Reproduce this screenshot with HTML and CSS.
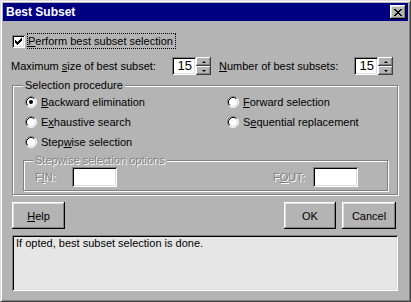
FILE: index.html
```html
<!DOCTYPE html>
<html lang="en">
<head>
  <meta charset="UTF-8" />
  <title>Best Subset</title>
  <link rel="stylesheet" href="styles.css">
</head>
<body>
  <div class="window">
    <div class="titlebar">
      <span class="title">Best Subset</span>
      <button class="close" aria-label="Close">
        <svg width="8" height="7" viewBox="0 0 8 7" shape-rendering="crispEdges">
          <path d="M0 0h2v1H0zM6 0h2v1H6zM1 1h2v1H1zM5 1h2v1H5zM2 2h4v1H2zM3 3h2v1H3zM2 4h4v1H2zM1 5h2v1H1zM5 5h2v1H5zM0 6h2v1H0zM6 6h2v1H6z" fill="#000"/>
        </svg>
      </button>
    </div>

    <div class="client">
      <div class="check-row">
        <span class="checkbox">
          <svg width="7" height="7" viewBox="0 0 7 7" shape-rendering="crispEdges">
            <path d="M6 0h1v3H6zM5 1h1v3H5zM4 2h1v3H4zM0 2h1v3H0zM1 3h1v3H1zM2 4h1v3H2zM3 3h1v3H3z" fill="#000"/>
          </svg>
        </span>
        <span class="focus"><u>P</u>erform best subset selection</span>
      </div>

      <div class="spin-row">
        <span class="lbl lbl-max">Maximum <u>s</u>ize of best subset:</span>
        <div class="spin">
          <div class="edit">15</div>
          <div class="arrows">
            <span class="arr"><i class="tri up"></i></span>
            <span class="arr"><i class="tri down"></i></span>
          </div>
        </div>
        <span class="lbl lbl-num"><u>N</u>umber of best subsets:</span>
        <div class="spin">
          <div class="edit">15</div>
          <div class="arrows">
            <span class="arr"><i class="tri up"></i></span>
            <span class="arr"><i class="tri down"></i></span>
          </div>
        </div>
      </div>

      <div class="group outer">
        <div class="caption">Selection procedure</div>
        <div class="radios">
          <label class="radio"><svg class="rb" width="12" height="12" viewBox="0 0 12 12"><circle cx="6" cy="6" r="5" fill="#fff"/><path d="M2.11 9.89A5.5 5.5 0 0 1 9.89 2.11" stroke="#808080" fill="none"/><path d="M9.89 2.11A5.5 5.5 0 0 1 2.11 9.89" stroke="#fff" fill="none"/><path d="M2.82 9.18A4.5 4.5 0 0 1 9.18 2.82" stroke="#000" fill="none"/><path d="M9.18 2.82A4.5 4.5 0 0 1 2.82 9.18" stroke="#dfdfdf" fill="none"/><circle cx="6" cy="6" r="2" fill="#000"/></svg><span><u>B</u>ackward elimination</span></label>
          <label class="radio"><svg class="rb" width="12" height="12" viewBox="0 0 12 12"><circle cx="6" cy="6" r="5" fill="#fff"/><path d="M2.11 9.89A5.5 5.5 0 0 1 9.89 2.11" stroke="#808080" fill="none"/><path d="M9.89 2.11A5.5 5.5 0 0 1 2.11 9.89" stroke="#fff" fill="none"/><path d="M2.82 9.18A4.5 4.5 0 0 1 9.18 2.82" stroke="#000" fill="none"/><path d="M9.18 2.82A4.5 4.5 0 0 1 2.82 9.18" stroke="#dfdfdf" fill="none"/></svg><span><u>F</u>orward selection</span></label>
          <label class="radio"><svg class="rb" width="12" height="12" viewBox="0 0 12 12"><circle cx="6" cy="6" r="5" fill="#fff"/><path d="M2.11 9.89A5.5 5.5 0 0 1 9.89 2.11" stroke="#808080" fill="none"/><path d="M9.89 2.11A5.5 5.5 0 0 1 2.11 9.89" stroke="#fff" fill="none"/><path d="M2.82 9.18A4.5 4.5 0 0 1 9.18 2.82" stroke="#000" fill="none"/><path d="M9.18 2.82A4.5 4.5 0 0 1 2.82 9.18" stroke="#dfdfdf" fill="none"/></svg><span>E<u>x</u>haustive search</span></label>
          <label class="radio"><svg class="rb" width="12" height="12" viewBox="0 0 12 12"><circle cx="6" cy="6" r="5" fill="#fff"/><path d="M2.11 9.89A5.5 5.5 0 0 1 9.89 2.11" stroke="#808080" fill="none"/><path d="M9.89 2.11A5.5 5.5 0 0 1 2.11 9.89" stroke="#fff" fill="none"/><path d="M2.82 9.18A4.5 4.5 0 0 1 9.18 2.82" stroke="#000" fill="none"/><path d="M9.18 2.82A4.5 4.5 0 0 1 2.82 9.18" stroke="#dfdfdf" fill="none"/></svg><span>S<u>e</u>quential replacement</span></label>
          <label class="radio"><svg class="rb" width="12" height="12" viewBox="0 0 12 12"><circle cx="6" cy="6" r="5" fill="#fff"/><path d="M2.11 9.89A5.5 5.5 0 0 1 9.89 2.11" stroke="#808080" fill="none"/><path d="M9.89 2.11A5.5 5.5 0 0 1 2.11 9.89" stroke="#fff" fill="none"/><path d="M2.82 9.18A4.5 4.5 0 0 1 9.18 2.82" stroke="#000" fill="none"/><path d="M9.18 2.82A4.5 4.5 0 0 1 2.82 9.18" stroke="#dfdfdf" fill="none"/></svg><span>Step<u>w</u>ise selection</span></label>
        </div>

        <div class="group inner">
          <div class="caption disabled">Stepwise selection options</div>
          <div class="opt-row">
            <span class="disabled lbl-fin">F<u>I</u>N:</span>
            <div class="edit wide"></div>
            <span class="disabled lbl-fout">F<u>O</u>UT:</span>
            <div class="edit wide"></div>
          </div>
        </div>
      </div>

      <div class="buttons">
        <button class="btn btn-help"><u>H</u>elp</button>
        <button class="btn btn-ok">OK</button>
        <button class="btn btn-cancel">Cancel</button>
      </div>

      <div class="hint">If opted, best subset selection is done.</div>
    </div>
  </div>
</body>
</html>
```

FILE: styles.css
```css
html, body {
  margin: 0;
  padding: 0;
  background: #b4b4b4;
}
body {
  font-family: 'Liberation Sans', Arial, sans-serif;
  font-size: 11px;
  color: #000;
}
u {
  text-decoration: underline;
  text-underline-offset: 1px;
}
.window {
  width: 411px;
  height: 302px;
  box-sizing: border-box;
  border: 1px solid;
  border-color: #dfdfdf #404040 #404040 #dfdfdf;
  box-shadow: inset 1px 1px #fff, inset -1px -1px #808080;
  padding: 2px;
  background: #b4b4b4;
}
.titlebar {
  height: 18px;
  background: #000080;
  display: flex;
  align-items: center;
  justify-content: space-between;
  padding-left: 3px;
}
.title {
  color: #fff;
  font-weight: bold;
  font-size: 12px;
}
.close {
  width: 16px;
  height: 14px;
  margin-right: 2px;
  padding: 0;
  border: none;
  background: #b4b4b4;
  box-shadow: inset -1px -1px #000, inset 1px 1px #fff, inset -2px -2px #808080, inset 2px 2px #dfdfdf;
  display: flex;
  align-items: center;
  justify-content: center;
}
.client {
  padding: 12px 10px 0 9px;
}

/* checkbox */
.check-row {
  display: flex;
  align-items: center;
  height: 16px;
}
.checkbox {
  width: 13px;
  height: 13px;
  box-sizing: border-box;
  background: #fff;
  box-shadow: inset 1px 1px #808080, inset -1px -1px #fff, inset 2px 2px #000, inset -2px -2px #dfdfdf;
  display: flex;
  align-items: center;
  justify-content: center;
}
.focus {
  margin-left: 2px;
  padding: 0 2px 0 0;
  line-height: 14px;
  border: 1px dotted #000;
}

/* spinners */
.spin-row {
  display: flex;
  align-items: center;
  margin-top: 8px;
  height: 18px;
}
.lbl-max {
  width: 161px;
  margin-left: -1px;
}
.lbl-num {
  width: 135px;
  margin-left: 8px;
}
.spin {
  display: flex;
  height: 18px;
}
.edit {
  width: 24px;
  height: 18px;
  box-sizing: border-box;
  background: #fff;
  box-shadow: inset 1px 1px #808080, inset -1px -1px #fff, inset 2px 2px #000, inset -2px -2px #dfdfdf;
  font-size: 13px;
  line-height: 18px;
  text-align: right;
  padding-right: 4px;
}
.arrows {
  width: 15px;
  display: flex;
  flex-direction: column;
}
.arr {
  height: 9px;
  background: #b4b4b4;
  box-shadow: inset -1px -1px #404040, inset 1px 1px #fff, inset -2px -2px #808080;
  display: flex;
  align-items: center;
  justify-content: center;
}
.tri {
  width: 0;
  height: 0;
  border-left: 2px solid transparent;
  border-right: 2px solid transparent;
}
.tri.up {
  border-bottom: 2px solid #000;
}
.tri.down {
  border-top: 2px solid #000;
}

/* group boxes */
.group {
  border: 1px solid #808080;
  box-shadow: inset 1px 1px #fff, 1px 1px #fff;
}
.caption {
  display: table;
  margin-top: -7px;
  padding: 0 2px;
  line-height: 13px;
  background: #b4b4b4;
}
.outer {
  margin-top: 10px;
  padding: 0 9px 3px 10px;
}
.radios {
  display: grid;
  grid-template-columns: 202px 1fr;
  grid-auto-rows: 20px;
}
.radio {
  display: flex;
  align-items: center;
  gap: 4px;
  padding-left: 2px;
}
.inner {
  margin-top: 8px;
  padding: 0 0 3px 9px;
}
.disabled {
  color: #808080;
  text-shadow: 1px 1px 0 #fff;
}
.opt-row {
  display: flex;
  align-items: center;
  height: 20px;
  padding-left: 2px;
}
.lbl-fin {
  width: 37px;
}
.lbl-fout {
  width: 40px;
  margin-left: 156px;
}
.edit.wide {
  width: 45px;
  height: 20px;
}

/* buttons */
.buttons {
  display: flex;
  margin-top: 7px;
  gap: 6px;
}
.btn {
  height: 27px;
  padding: 0;
  border: none;
  background: #b4b4b4;
  font-family: inherit;
  font-size: 11px;
  color: #000;
  box-shadow: inset -1px -1px #000, inset 1px 1px #fff, inset -2px -2px #808080, inset 2px 2px #dfdfdf;
}
.btn-help {
  width: 53px;
  margin-right: auto;
}
.btn-ok {
  width: 52px;
}
.btn-cancel {
  width: 54px;
  margin-right: 2px;
}
.hint {
  margin-top: 6px;
  height: 56px;
  width: 386px;
  box-sizing: border-box;
  background: #e6e6e6;
  box-shadow: inset 1px 1px #808080, inset -1px -1px #fff, inset 2px 2px #000, inset -2px -2px #dfdfdf;
  padding: 2px 4px;
  line-height: 13px;
}
```
